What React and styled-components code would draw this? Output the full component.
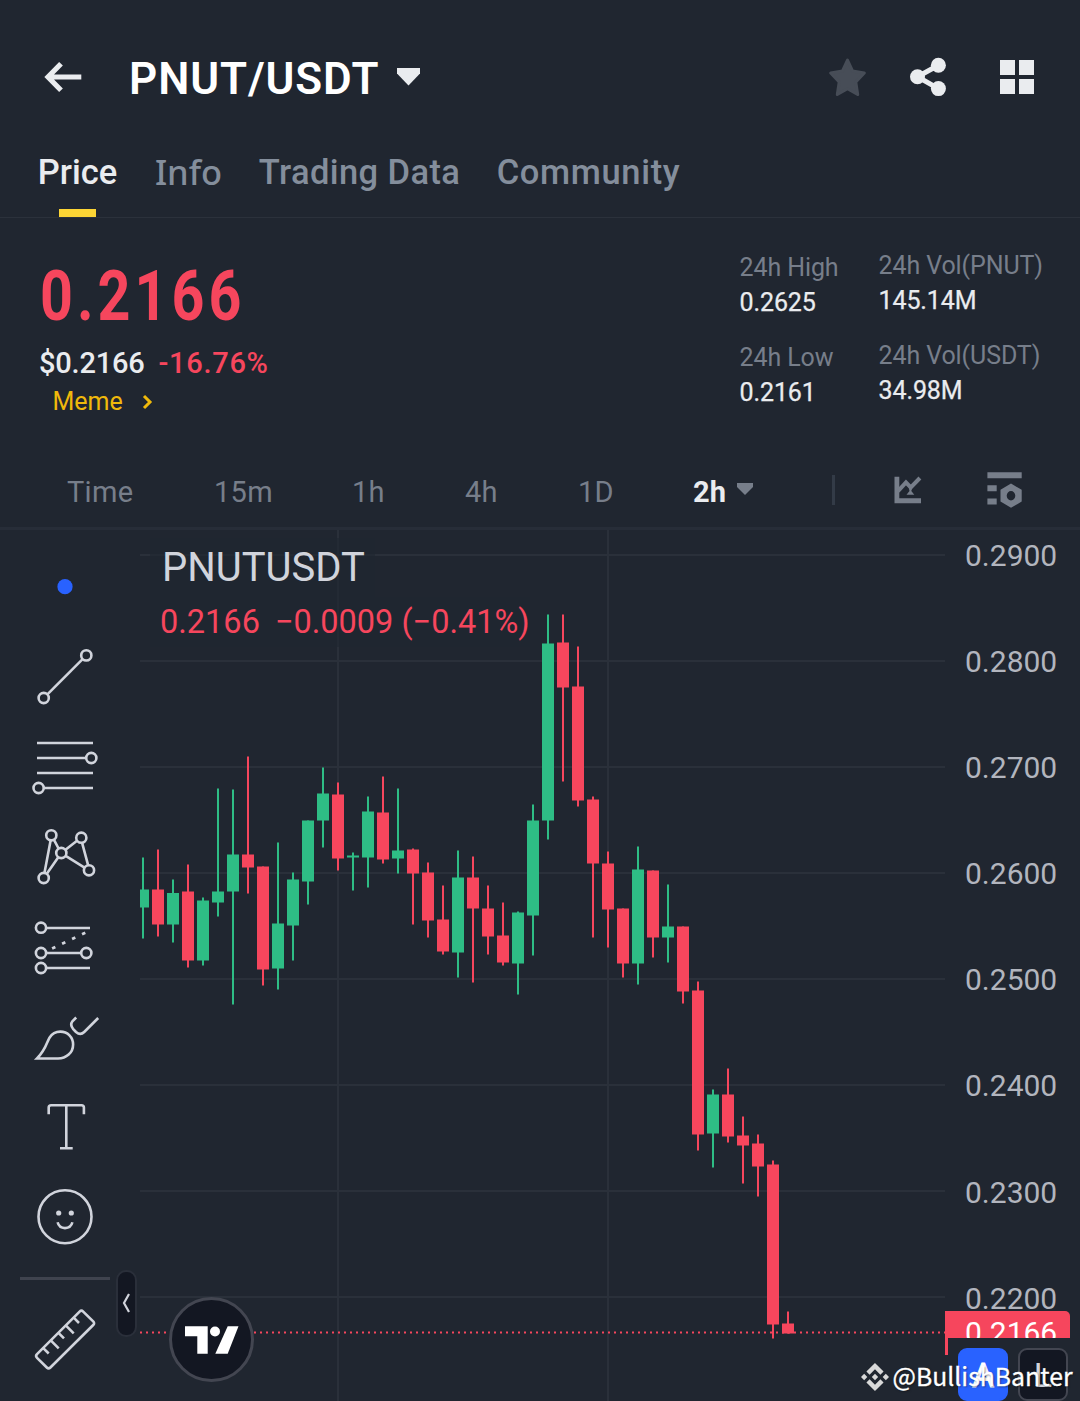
import React from "react";
import styled, { createGlobalStyle } from "styled-components";

const C = {
  bg: "#202630",
  text: "#eaecef",
  muted: "#848e9c",
  dim: "#777e8a",
  red: "#f6465d",
  green: "#2ebd85",
  yellow: "#fcd535",
  gold: "#f0b90b",
  line: "#2b313b",
  tool: "#d1d4dc",
  dark: "#131722",
  blue: "#2962ff",
};

const CHART_TOP = 530;
const CHART_HEIGHT = 871;

const GlobalStyle = createGlobalStyle`
  * { box-sizing: border-box; }
  body { margin: 0; background: ${C.bg}; }
`;

const Screen = styled.div`
  width: 1080px;
  height: 1401px;
  overflow: hidden;
  position: relative;
  display: flex;
  flex-direction: column;
  background: ${C.bg};
  color: ${C.text};
  font-family: Roboto, "Liberation Sans", sans-serif;
  white-space: nowrap;
  svg { display: block; flex: none; }
`;

const Header = styled.header`
  flex: none;
  height: 140px;
  padding: 50px 45px 36px 43px;
  display: flex;
  align-items: center;
`;

const Title = styled.h1`
  margin: 3px 0 0 46px;
  font-size: 44px;
  line-height: 54px;
  font-weight: 600;
  letter-spacing: 0.9px;
  color: #fff;
  width: 268px;
`;

const HeaderActions = styled.div`
  margin-left: auto;
  display: flex;
  align-items: center;
  gap: 42.5px;
`;

const Tabs = styled.nav`
  flex: none;
  height: 78px;
  padding-left: 38px;
  display: flex;
  border-bottom: 1.5px solid ${C.line};
`;

const Tab = styled.div`
  display: flex;
  flex-direction: column;
  align-items: center;
  justify-content: space-between;
  width: ${(p) => p.$w}px;
  margin-right: ${(p) => p.$gap}px;
  font-family: ${(p) => (p.$slab ? '"Noto Sans", sans-serif' : "inherit")};
  font-size: 34.5px;
  font-weight: 500;
  line-height: 64px;
  letter-spacing: ${(p) => p.$ls || 0}px;
  color: ${(p) => (p.$active ? C.text : C.muted)};
`;

const TabMark = styled.i`
  width: 37px;
  height: 8px;
  background: ${C.yellow};
`;

const Summary = styled.section`
  flex: none;
  height: 237px;
  padding: 30px 0 0 39px;
  display: flex;
`;

const PriceBlock = styled.div`
  width: 700.5px;
`;

const BigPrice = styled.div`
  margin: 8px 0 0 0.5px;
  font-size: 70px;
  line-height: 80px;
  font-weight: 700;
  letter-spacing: 4.9px;
  color: ${C.red};
  transform: scaleX(0.82);
  transform-origin: 0 50%;
`;

const SubPrice = styled.div`
  margin-top: 9px;
  display: flex;
  gap: 14px;
  font-size: 29px;
  line-height: 36px;
  font-weight: 500;
`;

const Fiat = styled.span`
  letter-spacing: -0.2px;
`;

const Change = styled.span`
  color: ${C.red};
  letter-spacing: 0.7px;
`;

const Category = styled.a`
  margin: 1px 0 0 13.5px;
  display: flex;
  align-items: center;
  gap: 19.5px;
  font-size: 25px;
  line-height: 40px;
  color: ${C.gold};
`;

const StatColumn = styled.dl`
  margin: ${(p) => p.$top}px 0 0;
  width: ${(p) => p.$w}px;
  font-size: 25px;
  line-height: 35px;
  letter-spacing: -0.1px;
`;

const StatLabel = styled.dt`
  color: ${C.dim};
`;

const StatValue = styled.dd`
  margin: 0 0 20px;
  font-weight: 400;
  -webkit-text-stroke: 0.25px ${C.text};
`;

const Intervals = styled.nav`
  flex: none;
  height: 75px;
  padding: 0 58px 2px 67px;
  display: grid;
  grid-template-columns: 147px 138px 113px 113px 115px 139px 61.5px 93px 35px;
  align-items: center;
  border-bottom: 3px solid #272d38;
`;

const Interval = styled.span`
  display: flex;
  align-items: center;
  gap: 11px;
  padding-top: 3px;
  font-size: 29px;
  line-height: 36px;
  letter-spacing: ${(p) => (p.$active ? 0 : 0.3)}px;
  font-weight: ${(p) => (p.$active ? 700 : 400)};
  color: ${(p) => (p.$active ? C.text : C.dim)};
`;

const Separator = styled.i`
  width: 3px;
  height: 30px;
  background: #333b47;
`;

const Chart = styled.main`
  flex: none;
  height: ${CHART_HEIGHT}px;
  display: flex;
  position: relative;
`;

const ToolColumn = styled.aside`
  width: 140px;
  padding-top: 12px;
`;

const ToolSvg = styled.svg`
  width: 140px;
  height: 90px;
  fill: none;
  stroke: ${C.tool};
  stroke-width: 2.6;
`;

const ToolDivider = styled.i`
  display: block;
  margin: 15px 0 14px 20px;
  width: 90px;
  height: 3px;
  background: #3f434e;
`;

const Plot = styled.div`
  width: 805px;
  position: relative;
`;

const Legend = styled.div`
  position: absolute;
  left: 10px;
  top: 8px;
`;

const LegendTitle = styled.div`
  width: 225px;
  padding: 1px 0 0 12px;
  font-size: 40px;
  line-height: 58px;
  color: #d1d4dc;
  background: rgba(32, 38, 48, 0.6);
`;

const LegendValues = styled.div`
  width: 380px;
  padding-left: 10px;
  font-size: 32.5px;
  line-height: 50px;
  display: flex;
  gap: 15px;
  color: ${C.red};
  background: rgba(32, 38, 48, 0.6);
`;

const Collapse = styled.button`
  position: absolute;
  left: -24.5px;
  top: 739.5px;
  width: 21.5px;
  height: 67px;
  padding: 0;
  display: grid;
  place-items: center;
  background: ${C.dark};
  border: 2px solid #2a2f3a;
  border-radius: 10px;
`;

const Brand = styled.a`
  position: absolute;
  left: 29px;
  top: 767px;
  width: 85px;
  height: 85px;
  display: grid;
  place-items: center;
  border: 3px solid #434651;
  border-radius: 50%;
  background: ${C.dark};
`;

const Axis = styled.div`
  width: 135px;
  padding: 7.8px 0 0 20px;
  position: relative;
`;

const AxisLabel = styled.div`
  height: 106.14px;
  font-size: 30px;
  line-height: 36px;
  color: #b2b5be;
`;

const PriceTag = styled.div`
  position: absolute;
  left: 0;
  top: 780.5px;
  width: 125px;
  height: 44.5px;
  padding: 4px 0 0 20px;
  font-size: 30px;
  line-height: 36px;
  color: #fff;
  background: ${C.red};
  border-radius: 0 5px 0 0;
`;

const ScaleButtons = styled.div`
  position: absolute;
  left: 3px;
  top: 807.7px;
  width: 132px;
  height: 64px;
  padding: 10px 0 0 10px;
  display: flex;
  gap: 10px;
  background: ${C.bg};
`;

const ScaleButton = styled.button`
  width: 50px;
  height: 53.5px;
  padding: 0;
  font: 400 34px/50px Roboto, sans-serif;
  -webkit-text-stroke: ${(p) => (p.$on ? "0.8px #fff" : "0")};
  color: ${(p) => (p.$on ? "#fff" : C.tool)};
  background: ${(p) => (p.$on ? C.blue : C.dark)};
  border: 2px solid ${(p) => (p.$on ? C.blue : "#434651")};
  border-radius: 9px;
`;

const Watermark = styled.div`
  position: absolute;
  right: 7.5px;
  bottom: 5px;
  display: flex;
  align-items: center;
  gap: 3px;
  font-family: "Noto Sans CJK SC", "Noto Sans", sans-serif;
  font-size: 24.8px;
  line-height: 38px;
  color: #fff;
  -webkit-text-stroke: 0.3px #fff;
  text-shadow: 1px 1px 2px rgba(0, 0, 0, 0.5);
`;

const Handle = styled.span`
  margin-bottom: 3px;
  line-height: 35px;
`;

const UP = 1;
const DOWN = 0;

// [direction, high, body top, body bottom, low] in screen units
const candles = [
  [UP, 857.5, 889.5, 907.5, 938.5],
  [DOWN, 849.5, 889.5, 924.5, 936.5],
  [UP, 879.5, 893, 924.5, 942.5],
  [DOWN, 864.5, 891.5, 960.5, 967.5],
  [UP, 897.5, 900.5, 960.5, 965.5],
  [UP, 788.5, 891.5, 902.5, 916.5],
  [UP, 789.5, 854.5, 891.5, 1004.5],
  [DOWN, 756.5, 854.5, 867.5, 893.5],
  [DOWN, 866.5, 866.5, 969.5, 985.5],
  [UP, 842.5, 923.5, 968.5, 989.5],
  [UP, 872.5, 879.5, 925.5, 960.5],
  [UP, 820.5, 820.5, 881.5, 904.5],
  [UP, 767.5, 793.5, 820.5, 847.5],
  [DOWN, 782.5, 794.5, 858.5, 870.5],
  [UP, 852.5, 855.5, 857.5, 890.5],
  [UP, 796.5, 811.5, 857.5, 887.5],
  [DOWN, 776.5, 812.5, 859.5, 863.5],
  [UP, 788.5, 850.5, 858.5, 873.5],
  [DOWN, 848.5, 849.5, 873.5, 924.5],
  [DOWN, 862.5, 872.5, 920.5, 937.5],
  [DOWN, 885.5, 919.5, 951.5, 954.5],
  [UP, 850.5, 877.5, 952.5, 977.5],
  [DOWN, 856.5, 877.5, 908.5, 982.5],
  [DOWN, 885.5, 908.5, 936.5, 954.5],
  [DOWN, 902.5, 935.5, 962.5, 965.5],
  [UP, 911.5, 912.5, 963.5, 994.5],
  [UP, 804.5, 820.5, 915.5, 955.5],
  [UP, 614.5, 643.5, 820.5, 839.5],
  [DOWN, 614.5, 642.5, 687.5, 781.5],
  [DOWN, 646.5, 686.5, 800.5, 806.5],
  [DOWN, 796.5, 799.5, 863.5, 937.5],
  [DOWN, 851.5, 863.5, 909.5, 947.5],
  [DOWN, 908.5, 908.5, 963.5, 977.5],
  [UP, 846.5, 869.5, 963.5, 984.5],
  [DOWN, 870.5, 870.5, 937.5, 957.5],
  [UP, 884.5, 926.5, 937.5, 962.5],
  [DOWN, 926.5, 926.5, 991.5, 1003.5],
  [DOWN, 981.5, 990.5, 1134.5, 1150.5],
  [UP, 1089.5, 1094.5, 1133.5, 1167.5],
  [DOWN, 1068.5, 1094.5, 1136.5, 1142.5],
  [DOWN, 1116.5, 1135.5, 1145.5, 1183.5],
  [DOWN, 1134.5, 1143.5, 1166.5, 1196.5],
  [DOWN, 1160.5, 1164.5, 1324.5, 1338.5],
  [DOWN, 1311.5, 1323.5, 1333.5, 1333.5],
];

const axisPrices = ["0.2900", "0.2800", "0.2700", "0.2600", "0.2500", "0.2400", "0.2300", "0.2200"];
const gridRows = [554, 660, 766, 872, 978, 1084, 1190, 1296];
const gridColumns = [337, 607];

function CandleChart() {
  return (
    <svg width="805" height={CHART_HEIGHT} viewBox={`140 ${CHART_TOP} 805 ${CHART_HEIGHT}`}>
      {gridRows.map((y) => (
        <rect key={y} x="140" y={y} width="805" height="2" fill="#2a303a" />
      ))}
      {gridColumns.map((x) => (
        <rect key={x} x={x} y={CHART_TOP} width="2" height={CHART_HEIGHT} fill="#2a303a" />
      ))}
      <path d="M140 1332.5H945" stroke={C.red} strokeWidth="2" strokeDasharray="2 4" />
      {candles.map(([dir, high, top, bottom, low], i) => {
        const x = 143 + 15 * i;
        return (
          <g key={x} fill={dir === UP ? C.green : C.red}>
            <rect x={x - 1} y={high} width="2" height={low - high} />
            <rect x={x - 6} y={top} width="12" height={bottom - top} />
          </g>
        );
      })}
    </svg>
  );
}

const Ring = ({ x, y }) => <circle cx={x} cy={y} r="5.1" />;

function Tool({ top, children }) {
  return <ToolSvg viewBox={`0 ${top} 140 90`}>{children}</ToolSvg>;
}

function DrawingTools() {
  return (
    <ToolColumn>
      <Tool top={542}>
        <circle cx="65" cy="586.7" r="7.6" fill={C.blue} stroke="none" />
      </Tool>
      <Tool top={632}>
        <Ring x={43.7} y={698} />
        <Ring x={86.3} y={655.4} />
        <path d="M47.4 694.3 82.6 659.1" />
      </Tool>
      <Tool top={722}>
        <path d="M37 743H93M37 758H86M37 773H93M44 788H93" />
        <Ring x={91.3} y={758} />
        <Ring x={38.6} y={788} />
      </Tool>
      <Tool top={812}>
        <Ring x={51.3} y={835.3} />
        <Ring x={81.3} y={837.7} />
        <Ring x={61.3} y={853} />
        <Ring x={43.7} y={878} />
        <Ring x={89} y={870.3} />
        <path d="M50.6 840.5 44.5 872.8M54 839.8 58.6 848.5M58.3 857.3 46.8 873.8M65.5 849.8 77 840.8M82.1 842.9 88.1 865.1M65.7 855.8 84.5 867.6" />
      </Tool>
      <Tool top={902}>
        <Ring x={41} y={927.7} />
        <Ring x={41} y={953} />
        <Ring x={86.3} y={953} />
        <Ring x={41} y={968} />
        <path d="M46.2 928H90M46.2 953H81.1M46.2 968H90" />
        <path d="M52.1 948.5 85.6 932.6" strokeWidth="2.8" strokeDasharray="3.6 7.45" />
      </Tool>
      <Tool top={992}>
        <path d="M37 1058.5C46 1049.5 46.8 1042 49.5 1037.7C52 1033.7 56 1031.6 60.3 1031.6C67.7 1031.6 73.1 1037.2 73.1 1044.4C73.1 1052.7 66.3 1058.5 58 1058.5Z" />
        <path d="M76.2 1017.5 72.4 1021.3Q69.8 1024.8 73 1028.8L76 1032Q80.4 1035.8 84.2 1032L98.2 1018" />
      </Tool>
      <Tool top={1082}>
        <path d="M48.7 1114.3V1107.5Q48.7 1105.3 51.2 1105.3H81.4Q83.9 1105.3 83.9 1107.5V1114.3M66.3 1105V1148M60 1148.3H72.7" />
      </Tool>
      <Tool top={1172}>
        <circle cx="65" cy="1216.7" r="26.5" />
        <g fill={C.tool} stroke="none">
          <circle cx="58.7" cy="1213" r="2.6" />
          <circle cx="71.3" cy="1213" r="2.6" />
        </g>
        <path d="M57.6 1222.3C59.5 1230 70.5 1230 72.4 1222.3" />
      </Tool>
      <ToolDivider />
      <Tool top={1294}>
        <path d="M79.6 1311.6Q81.4 1309.8 83.2 1311.6L93.2 1321.4Q95 1323.2 93.2 1325L50.4 1367.5Q48.6 1369.3 46.8 1367.5L37 1357.8Q35.2 1356 37 1354.2Z" />
        <path d="M43.5 1348.3 48.7 1353.5M51 1340.7 58.7 1348.4M58.7 1333.1 64 1338.4M66 1325.7 73.7 1333.4M73.7 1317.7 79 1323" />
      </Tool>
    </ToolColumn>
  );
}

export default function App() {
  return (
    <Screen>
      <GlobalStyle />
      <Header>
        <svg width="40" height="32" viewBox="43 61.3 40 32" fill="none" stroke={C.text} strokeWidth="5.2">
          <path d="M81.3 77.3H48M61 64 48 77.3 61 90.6" />
        </svg>
        <Title>PNUT/USDT</Title>
        <svg width="23" height="18" viewBox="0 0 23 18" fill={C.text}>
          <path d="M0 0H23V5.5L11.5 17.6 0 5.5Z" />
        </svg>
        <HeaderActions>
          <svg width="38" height="40" viewBox="829 57.2 38 40" fill="#474d57" stroke="#474d57" strokeWidth="3" strokeLinejoin="round">
            <path d="M847.5 60.3 852.5 71.2 864.3 73.2 855.8 82.3 857.7 94.7 847.5 89 837.3 94.7 839.2 82.3 830.7 73.2 842.5 71.2Z" />
          </svg>
          <svg width="37" height="40" viewBox="910 56.7 37 40" fill={C.text}>
            <circle cx="917.5" cy="76.5" r="7.5" />
            <circle cx="938.4" cy="65" r="7.5" />
            <circle cx="938.4" cy="88.3" r="7.5" />
            <path d="M938.4 65 917.5 76.5 938.4 88.3" fill="none" stroke={C.text} strokeWidth="5" />
          </svg>
          <svg width="46" height="34" viewBox="989 59.7 46 34" fill={C.text}>
            <path d="M1000 59.7h15v15h-15zM1019 59.7h15v15h-15zM1000 78.7h15v15h-15zM1019 78.7h15v15h-15z" />
          </svg>
        </HeaderActions>
      </Header>

      <Tabs>
        <Tab $active $w={79} $gap={38} $ls={0}>
          Price
          <TabMark />
        </Tab>
        <Tab $slab $w={67} $gap={37}>Info</Tab>
        <Tab $w={201} $gap={36.5} $ls={0.4}>Trading Data</Tab>
        <Tab $w={184} $gap={0} $ls={0.65}>Community</Tab>
      </Tabs>

      <Summary>
        <PriceBlock>
          <BigPrice>0.2166</BigPrice>
          <SubPrice>
            <Fiat>$0.2166</Fiat>
            <Change>-16.76%</Change>
          </SubPrice>
          <Category>
            Meme
            <svg width="12" height="16" viewBox="0 0 12 16" fill="none" stroke={C.gold} strokeWidth="3">
              <path d="M2 2 8 8 2 14" />
            </svg>
          </Category>
        </PriceBlock>
        <StatColumn $top={2} $w={139}>
          <StatLabel>24h High</StatLabel>
          <StatValue>0.2625</StatValue>
          <StatLabel>24h Low</StatLabel>
          <StatValue>0.2161</StatValue>
        </StatColumn>
        <StatColumn $top={0} $w={180}>
          <StatLabel>24h Vol(PNUT)</StatLabel>
          <StatValue>145.14M</StatValue>
          <StatLabel>24h Vol(USDT)</StatLabel>
          <StatValue>34.98M</StatValue>
        </StatColumn>
      </Summary>

      <Intervals>
        <Interval>Time</Interval>
        <Interval>15m</Interval>
        <Interval>1h</Interval>
        <Interval>4h</Interval>
        <Interval>1D</Interval>
        <Interval $active>
          2h
          <svg width="16" height="18" viewBox="0 0 16 18" fill={C.dim}>
            <path d="M0 0H16V4L8 12 0 4Z" />
          </svg>
        </Interval>
        <Separator />
        <svg width="28" height="28" viewBox="894.5 475.3 28 28" fill={C.dim}>
          <path d="M895 476H899.8V497.6H921.5V502.6H895Z" />
          <path d="M898.5 490.5 906.5 481.8 911.3 486.6 920.4 477.3" fill="none" stroke={C.dim} strokeWidth="4" />
          <path d="M909 486H913L911.8 490.2 914.8 494H907L910 490.2Z" />
        </svg>
        <svg width="35" height="36" viewBox="987.3 472.4 35 36" fill={C.dim}>
          <path d="M987.7 472.7H1022V478.7H987.7ZM987.7 485.7H997V491.7H987.7ZM987.7 499H997V505H987.7Z" />
          <path fillRule="evenodd" d="M1011.3 484 1022 490.2V502L1011.3 508.2 1000.8 502V490.2ZM1011.3 491.4A4.3 4.7 0 1 0 1011.3 500.8A4.3 4.7 0 1 0 1011.3 491.4Z" />
        </svg>
      </Intervals>

      <Chart>
        <DrawingTools />
        <Plot>
          <CandleChart />
          <Legend>
            <LegendTitle>PNUTUSDT</LegendTitle>
            <LegendValues>
              <span>0.2166</span>
              <span>−0.0009 (−0.41%)</span>
            </LegendValues>
          </Legend>
          <Collapse>
            <svg width="9" height="20" viewBox="0 0 9 20" fill="none" stroke={C.tool} strokeWidth="2.2">
              <path d="M7 1 2 10 7 19" />
            </svg>
          </Collapse>
          <Brand>
            <svg width="54" height="28" viewBox="185 1326.5 54 28" fill="#fff">
              <path d="M185 1326.7H207.7V1354.3H197.3V1336.7H185Z" />
              <circle cx="215" cy="1332" r="5" />
              <path d="M227.7 1326.7H238.5L227.7 1354.3H215.3Z" />
            </svg>
          </Brand>
        </Plot>
        <Axis>
          {axisPrices.map((price) => (
            <AxisLabel key={price}>{price}</AxisLabel>
          ))}
          <PriceTag>0.2166</PriceTag>
          <ScaleButtons>
            <ScaleButton $on>A</ScaleButton>
            <ScaleButton>L</ScaleButton>
          </ScaleButtons>
        </Axis>
      </Chart>

      <Watermark>
        <svg width="28" height="28" viewBox="0 0 24 24" fill="#d9d9d9">
          <path d="M16.624 13.9202l2.7175 2.7154-7.353 7.353-7.353-7.352 2.7175-2.7164 4.6355 4.6595 4.6356-4.6595zm4.6366-4.6366L24 12l-2.7154 2.7164L18.5682 12l2.6924-2.7164zm-9.272.001l2.7163 2.6914-2.7164 2.7174v-.001L9.2721 12l2.7164-2.7154zm-9.2722-.001L5.4088 12l-2.6914 2.6924L0 12l2.7164-2.7164zM11.9885.0115l7.353 7.329-2.7174 2.7154-4.6356-4.6356-4.6355 4.6595-2.7174-2.7154 7.353-7.353z" />
        </svg>
        <Handle>@BullishBanter</Handle>
      </Watermark>
    </Screen>
  );
}
